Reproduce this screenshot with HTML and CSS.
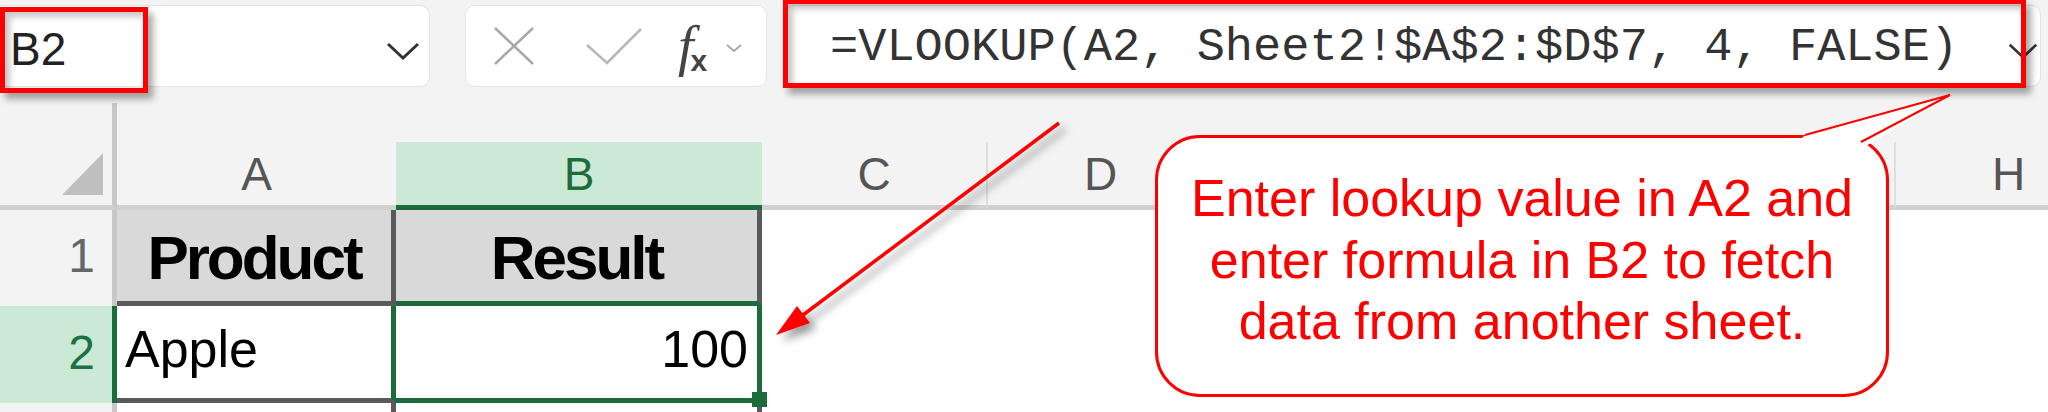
FILE: index.html
```html
<!DOCTYPE html>
<html lang="en">
<head>
  <meta charset="UTF-8">
  <title>VLOOKUP from another sheet</title>
  <link rel="stylesheet" href="styles.css">
</head>
<body>
<div class="page">

  <div class="toolbar">
    <div class="namebox">
      <span class="cellref">B2</span>
      <svg class="chev" viewBox="0 0 34 20"><polyline points="2,3 17,17 32,3" /></svg>
      <div class="mark mark-name"></div>
    </div>

    <div class="fxbox">
      <svg class="ico-x" viewBox="0 0 42 40"><line x1="2" y1="2" x2="40" y2="38" /><line x1="40" y1="2" x2="2" y2="38" /></svg>
      <svg class="ico-ok" viewBox="0 0 58 38"><polyline points="2,18 22,36 56,2" /></svg>
      <span class="fx"><i>f</i><span class="fx-x">x</span></span>
      <svg class="chev-sm" viewBox="0 0 18 10"><polyline points="2,2 9,8 16,2" /></svg>
    </div>

    <div class="formula">
      <span class="ftext">=VLOOKUP(A2, Sheet2!$A$2:$D$7, 4, FALSE)</span>
      <svg class="chev" viewBox="0 0 34 20"><polyline points="2,3 17,17 32,3" /></svg>
      <div class="mark mark-formula"></div>
    </div>
  </div>

  <div class="sheet">
    <div class="colbar">
      <div class="corner"><div class="tri"></div></div>
      <div class="colhdr col-a">A</div>
      <div class="colhdr col-b sel">B</div>
      <div class="colhdr col-c">C</div>
      <div class="colhdr">D</div>
      <div class="colhdr"></div>
      <div class="colhdr"></div>
      <div class="colhdr"></div>
      <div class="colhdr">H</div>
    </div>

    <div class="rows">
      <div class="rowhdr">1</div>
      <div class="cell th">Product</div>
      <div class="cell th th-b">Result</div>

      <div class="rowhdr sel">2</div>
      <div class="cell td td-a">Apple</div>
      <div class="cell td num active">100</div>

      <div class="rowhdr"></div>
      <div class="cell td"></div>
      <div class="cell td"></div>
    </div>
  </div>

  <div class="callout">
    Enter lookup value in A2 and<br>
    enter formula in B2 to fetch<br>
    data from another sheet.
  </div>

  <svg class="overlay" viewBox="0 0 2048 412">
    <defs>
      <filter id="shade" x="-20%" y="-20%" width="140%" height="140%">
        <feDropShadow dx="6" dy="6" stdDeviation="4" flood-color="#000" flood-opacity="0.4" />
      </filter>
    </defs>
    <g filter="url(#shade)">
      <line x1="1059" y1="123" x2="803" y2="315" stroke="#ff0000" stroke-width="3.5" />
      <polygon points="776,335 810,323 797,306" fill="#ff0000" />
    </g>
    <polygon points="1800,139.5 1805,135.5 1950,95 1866,146 1800,146" fill="#fff" />
    <polyline points="1805,135 1950,95 1861,142" fill="none" stroke="#ff0000" stroke-width="2" />
  </svg>

</div>
</body>
</html>
```

FILE: styles.css
```css
body {
  margin: 0;
  background: #f3f3f3;
  font-family: "Liberation Sans", Arial, sans-serif;
}
.page {
  position: relative;
  width: 2048px;
  height: 412px;
  overflow: hidden;
}

/* formula bar */
.toolbar {
  display: flex;
  align-items: flex-start;
  height: 103px;
  padding-top: 5px;
  box-sizing: border-box;
}
.namebox {
  position: relative;
  display: flex;
  align-items: center;
  justify-content: space-between;
  width: 430px;
  height: 82px;
  box-sizing: border-box;
  padding: 0 9px 0 10px;
  background: #fff;
  border: 1px solid #e3e3e3;
  border-left: none;
  border-radius: 0 10px 10px 0;
}
.cellref {
  font-size: 46px;
  line-height: 1;
  padding-top: 6px;
  color: #222;
}
.chev {
  width: 34px;
  height: 20px;
  margin-top: 10px;
}
.chev polyline {
  fill: none;
  stroke: #333;
  stroke-width: 3;
}
.fxbox {
  display: flex;
  align-items: center;
  width: 302px;
  height: 82px;
  margin-left: 35px;
  box-sizing: border-box;
  padding-left: 27px;
  background: #fff;
  border: 1px solid #e3e3e3;
  border-radius: 10px;
}
.ico-x {
  width: 42px;
  height: 40px;
}
.ico-x line {
  stroke: #a8a8a8;
  stroke-width: 2.5;
}
.ico-ok {
  width: 58px;
  height: 38px;
  margin-left: 50px;
}
.ico-ok polyline {
  fill: none;
  stroke: #b8b8b8;
  stroke-width: 2.5;
}
.fx {
  display: flex;
  align-items: flex-end;
  margin-left: 35px;
  color: #444;
  line-height: 1;
}
.fx i {
  font-family: "Liberation Serif", serif;
  font-size: 56px;
}
.fx-x {
  font-size: 30px;
  font-weight: bold;
  margin-left: -3px;
  margin-bottom: -2px;
}
.chev-sm {
  width: 18px;
  height: 10px;
  margin-left: 18px;
  margin-top: 4px;
}
.chev-sm polyline {
  fill: none;
  stroke: #aaa;
  stroke-width: 2;
}
.formula {
  position: relative;
  display: flex;
  align-items: center;
  width: 1256px;
  height: 82px;
  margin-left: 18px;
  box-sizing: border-box;
  padding: 0 0 0 44px;
  background: #fff;
  border: 1px solid #e3e3e3;
  border-radius: 10px;
}
.ftext {
  font-family: "Liberation Mono", "DejaVu Sans Mono", monospace;
  font-size: 47px;
  line-height: 1;
  padding-top: 3px;
  color: #333;
  white-space: pre;
}
.formula .chev {
  margin-left: auto;
  width: 30px;
  margin-right: 2px;
}

/* red highlight frames */
.mark {
  position: absolute;
  box-sizing: border-box;
  border: 5px solid #ff0000;
  box-shadow: inset 5px 5px 6px rgba(0, 0, 0, 0.22), 5px 6px 7px rgba(0, 0, 0, 0.35);
  pointer-events: none;
}
.mark-name {
  left: 0;
  top: 1px;
  width: 148px;
  height: 86px;
}
.mark-formula {
  left: -3px;
  top: -7px;
  width: 1243px;
  height: 89px;
}

/* sheet */
.colbar {
  display: flex;
  align-items: flex-end;
  height: 107px;
}
.corner {
  display: flex;
  justify-content: flex-end;
  align-items: flex-end;
  flex: none;
  width: 117px;
  height: 107px;
  box-sizing: border-box;
  padding: 0 9px 10px 0;
  border-right: 5px solid #c8c8c8;
  border-bottom: 5px solid #d0d0d0;
}
.tri {
  width: 0;
  height: 0;
  border-left: 41px solid transparent;
  border-bottom: 42px solid #bfbfbf;
}
.colhdr {
  display: flex;
  justify-content: center;
  align-items: flex-end;
  flex: none;
  width: 227px;
  height: 68px;
  box-sizing: border-box;
  padding-bottom: 8px;
  border-right: 2px solid #dedede;
  border-bottom: 5px solid #d0d0d0;
  font-size: 46px;
  line-height: 1;
  color: #555;
}
.col-a {
  width: 279px;
  border-right: none;
}
.col-b {
  width: 366px;
  border-right: none;
}
.col-c {
  width: 226px;
}
.colhdr.sel {
  background: #caead6;
  color: #1f6b3d;
  border-bottom-color: #1c6b3a;
}

.rows {
  display: grid;
  grid-template-columns: 117px 279px 366px;
  grid-template-rows: 96px 97px 40px;
  background: #fff;
}
.rowhdr {
  display: flex;
  justify-content: flex-end;
  align-items: flex-end;
  box-sizing: border-box;
  padding: 0 17px 26px 0;
  background: #f3f3f3;
  border-right: 5px solid #c8c8c8;
  font-size: 48px;
  line-height: 1;
  color: #666;
}
.rowhdr.sel {
  background: #caead6;
  color: #1e7145;
  border-right-color: #1c6b3a;
}
.cell {
  display: flex;
  align-items: flex-end;
  box-sizing: border-box;
  border-right: 5px solid #5a5a5a;
  line-height: 1;
  color: #000;
}
.th {
  justify-content: center;
  padding-bottom: 12px;
  background: #d9d9d9;
  border-bottom: 5px solid #5a5a5a;
  font-size: 62px;
  font-weight: bold;
  letter-spacing: -3px;
}
.th-b {
  border-bottom-color: #1c6b3a;
}
.td {
  padding: 0 8px 23px;
  font-size: 52px;
}
.td-a {
  border-right-color: #1c6b3a;
  border-bottom: 5px solid #5a5a5a;
}
.num {
  justify-content: flex-end;
  padding-right: 9px;
}
.active {
  position: relative;
  border-right-color: #1c6b3a;
  border-bottom: 5px solid #1c6b3a;
}
.active::after {
  content: "";
  position: absolute;
  right: -10px;
  bottom: -9px;
  width: 15px;
  height: 15px;
  background: #1c6b3a;
}

/* note */
.callout {
  position: absolute;
  left: 1155px;
  top: 135px;
  width: 734px;
  height: 262px;
  box-sizing: border-box;
  padding-top: 30px;
  background: #fff;
  border: 3px solid #ff0000;
  border-radius: 45px;
  color: #ff0000;
  font-size: 52px;
  line-height: 61.5px;
  text-align: center;
}
.overlay {
  position: absolute;
  left: 0;
  top: 0;
  width: 2048px;
  height: 412px;
  pointer-events: none;
}
```
